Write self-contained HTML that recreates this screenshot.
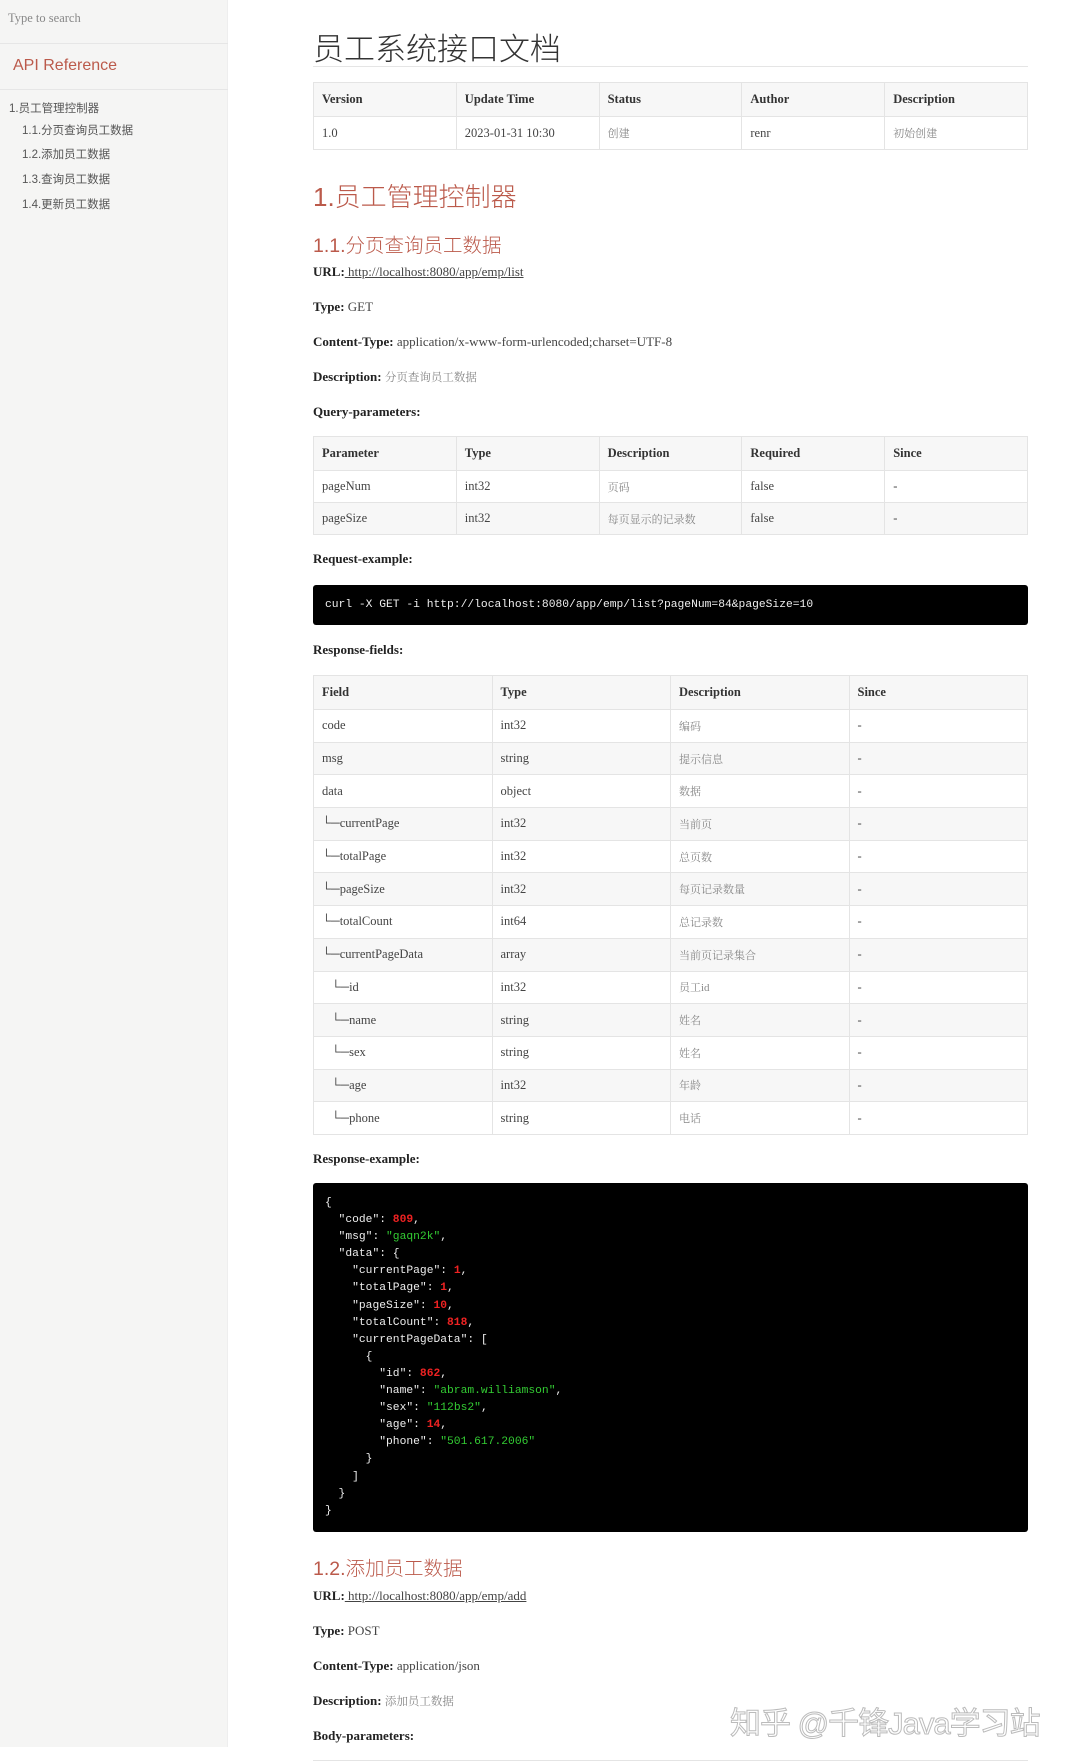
<!DOCTYPE html>
<html><head><meta charset="utf-8">
<style>
*{margin:0;padding:0;box-sizing:border-box}
body{width:1080px;height:1747px;overflow:hidden;background:#fff;font-family:"Liberation Serif","Noto Serif CJK SC",serif;color:#333;position:relative}
.side{position:absolute;left:0;top:0;width:228px;height:1747px;background:#f5f5f4;border-right:1px solid #eee}
.abs{position:absolute;white-space:nowrap}
.sd{position:absolute;left:0;width:228px;height:1px;background:#e6e6e6}
.nav{font-family:"Liberation Sans","Noto Sans CJK SC",sans-serif;font-size:11.5px;color:#555}
.red{color:#bb5a4b;font-family:"Liberation Sans","Noto Sans CJK SC",sans-serif;font-weight:300}
.p{font-size:13px;color:#444}
.p b{color:#222}
.cn{color:#888;font-size:11.5px}
table{position:absolute;left:313px;width:715px;border-collapse:collapse;font-size:12.5px;table-layout:fixed}
td,th{border:1px solid #e4e4e4;padding:0 8px;text-align:left;color:#444;font-weight:normal;white-space:nowrap}
th{font-weight:bold;color:#333;background:#f7f7f7}
tr.g td{background:#f7f7f7}
td.c{color:#888;font-size:11px}
.code{position:absolute;left:313px;width:715px;background:#000;border-radius:3px;color:#eee;font-family:"Liberation Mono","DejaVu Sans Mono",monospace;font-size:11.3px}
.n{color:#e22;font-weight:bold}.s{color:#3c3}
</style></head><body>
<div class="side">
<div class="abs" style="left:8px;top:11px;font-size:12.5px;color:#888">Type to search</div>
<div class="sd" style="top:43px"></div>
<div class="abs" style="left:13px;top:57px;font-size:16px;color:#bb5a4b;font-family:'Liberation Sans',sans-serif">API Reference</div>
<div class="sd" style="top:89px"></div>
<div class="abs nav" style="left:9px;top:100px">1.员工管理控制器</div>
<div class="abs nav" style="left:22px;top:122px">1.1.分页查询员工数据</div>
<div class="abs nav" style="left:22px;top:146px">1.2.添加员工数据</div>
<div class="abs nav" style="left:22px;top:171px">1.3.查询员工数据</div>
<div class="abs nav" style="left:22px;top:196px">1.4.更新员工数据</div>
</div>

<div class="abs" style="left:313px;top:24px;font-size:31px;color:#333;font-family:'Liberation Sans','Noto Sans CJK SC',sans-serif;font-weight:300">员工系统接口文档</div>
<div class="abs" style="left:313px;top:66px;width:715px;height:1px;background:#e5e5e5"></div>

<table style="top:82px">
<tr style="height:34px"><th>Version</th><th>Update Time</th><th>Status</th><th>Author</th><th>Description</th></tr>
<tr style="height:33px"><td>1.0</td><td>2023-01-31 10:30</td><td class="c">创建</td><td>renr</td><td class="c">初始创建</td></tr>
</table>

<div class="abs red" style="left:313px;top:177px;font-size:26px">1.员工管理控制器</div>
<div class="abs red" style="left:313px;top:229px;font-size:19.5px">1.1.分页查询员工数据</div>
<div class="abs p" style="left:313px;top:264px"><b>URL:</b><u> http://localhost:8080/app/emp/list</u></div>
<div class="abs p" style="left:313px;top:299px"><b>Type:</b> GET</div>
<div class="abs p" style="left:313px;top:334px"><b>Content-Type:</b> application/x-www-form-urlencoded;charset=UTF-8</div>
<div class="abs p" style="left:313px;top:369px"><b>Description:</b> <span class="cn">分页查询员工数据</span></div>
<div class="abs p" style="left:313px;top:404px"><b>Query-parameters:</b></div>

<table style="top:436px">
<tr style="height:34px" ><th>Parameter</th><th>Type</th><th>Description</th><th>Required</th><th>Since</th></tr>
<tr style="height:32px"><td>pageNum</td><td>int32</td><td class="c">页码</td><td>false</td><td>-</td></tr>
<tr class="g" style="height:32px"><td>pageSize</td><td>int32</td><td class="c">每页显示的记录数</td><td>false</td><td>-</td></tr>
</table>

<div class="abs p" style="left:313px;top:551px"><b>Request-example:</b></div>
<div class="code" style="top:585px;height:40px;padding:11px 12px;line-height:18px">curl -X GET -i http://localhost:8080/app/emp/list?pageNum=84&amp;pageSize=10</div>

<div class="abs p" style="left:313px;top:642px"><b>Response-fields:</b></div>
<table style="top:675px">
<tr style="height:34px"><th>Field</th><th>Type</th><th>Description</th><th>Since</th></tr>
<tr style="height:32.7px"><td>code</td><td>int32</td><td class="c">编码</td><td>-</td></tr>
<tr class="g" style="height:32.7px"><td>msg</td><td>string</td><td class="c">提示信息</td><td>-</td></tr>
<tr style="height:32.7px"><td>data</td><td>object</td><td class="c">数据</td><td>-</td></tr>
<tr class="g" style="height:32.7px"><td>└─currentPage</td><td>int32</td><td class="c">当前页</td><td>-</td></tr>
<tr style="height:32.7px"><td>└─totalPage</td><td>int32</td><td class="c">总页数</td><td>-</td></tr>
<tr class="g" style="height:32.7px"><td>└─pageSize</td><td>int32</td><td class="c">每页记录数量</td><td>-</td></tr>
<tr style="height:32.7px"><td>└─totalCount</td><td>int64</td><td class="c">总记录数</td><td>-</td></tr>
<tr class="g" style="height:32.7px"><td>└─currentPageData</td><td>array</td><td class="c">当前页记录集合</td><td>-</td></tr>
<tr style="height:32.7px"><td>&nbsp;&nbsp;&nbsp;└─id</td><td>int32</td><td class="c">员工id</td><td>-</td></tr>
<tr class="g" style="height:32.7px"><td>&nbsp;&nbsp;&nbsp;└─name</td><td>string</td><td class="c">姓名</td><td>-</td></tr>
<tr style="height:32.7px"><td>&nbsp;&nbsp;&nbsp;└─sex</td><td>string</td><td class="c">姓名</td><td>-</td></tr>
<tr class="g" style="height:32.7px"><td>&nbsp;&nbsp;&nbsp;└─age</td><td>int32</td><td class="c">年龄</td><td>-</td></tr>
<tr style="height:32.7px"><td>&nbsp;&nbsp;&nbsp;└─phone</td><td>string</td><td class="c">电话</td><td>-</td></tr>
</table>

<div class="abs p" style="left:313px;top:1151px"><b>Response-example:</b></div>
<div class="code" style="top:1183px;height:349px;padding:12px 12px;line-height:17.1px;white-space:pre">{
  "code": <span class="n">809</span>,
  "msg": <span class="s">"gaqn2k"</span>,
  "data": {
    "currentPage": <span class="n">1</span>,
    "totalPage": <span class="n">1</span>,
    "pageSize": <span class="n">10</span>,
    "totalCount": <span class="n">818</span>,
    "currentPageData": [
      {
        "id": <span class="n">862</span>,
        "name": <span class="s">"abram.williamson"</span>,
        "sex": <span class="s">"112bs2"</span>,
        "age": <span class="n">14</span>,
        "phone": <span class="s">"501.617.2006"</span>
      }
    ]
  }
}</div>

<div class="abs red" style="left:313px;top:1552px;font-size:19.5px">1.2.添加员工数据</div>
<div class="abs p" style="left:313px;top:1588px"><b>URL:</b><u> http://localhost:8080/app/emp/add</u></div>
<div class="abs p" style="left:313px;top:1623px"><b>Type:</b> POST</div>
<div class="abs p" style="left:313px;top:1658px"><b>Content-Type:</b> application/json</div>
<div class="abs p" style="left:313px;top:1693px"><b>Description:</b> <span class="cn">添加员工数据</span></div>
<div class="abs p" style="left:313px;top:1728px"><b>Body-parameters:</b></div>
<div class="abs" style="left:313px;top:1760px;width:715px;height:1px;background:#e4e4e4"></div>

<div class="abs" style="left:730px;top:1698px;font-size:31px;font-family:'Liberation Sans','Noto Sans CJK SC',sans-serif;color:#fff;-webkit-text-stroke:1px #bbb;letter-spacing:-1px">知乎 @千锋Java学习站</div>
</body></html>
